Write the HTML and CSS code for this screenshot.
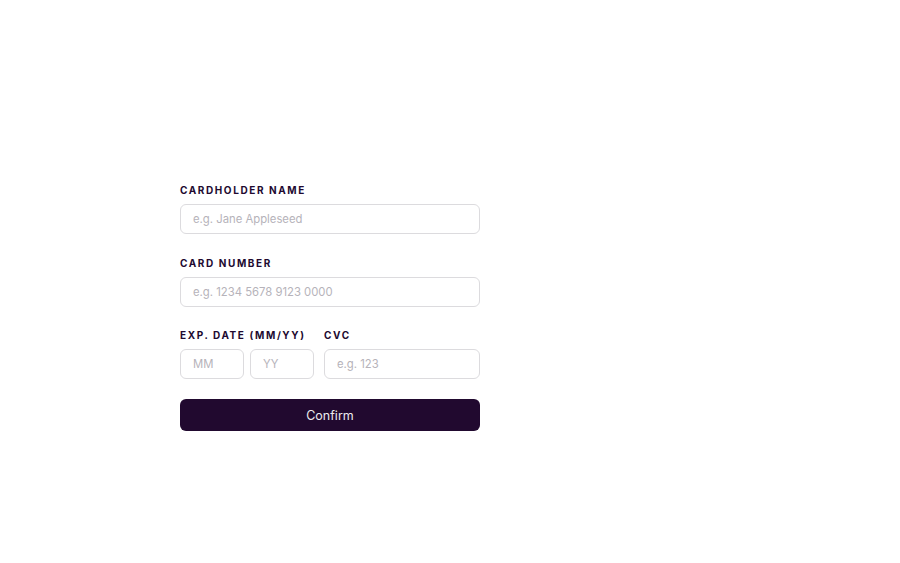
FILE: index.html
```html
<!DOCTYPE html>
<html lang="en">
<head>
<meta charset="utf-8">
<title>Card details</title>
<link rel="stylesheet" href="styles.css">
</head>
<body>
<main class="page">
  <form class="card-form">
    <div class="field">
      <label class="label" for="name">Cardholder Name</label>
      <input class="input" id="name" type="text" placeholder="e.g. Jane Appleseed">
    </div>
    <div class="field">
      <label class="label" for="number">Card Number</label>
      <input class="input" id="number" type="text" placeholder="e.g. 1234 5678 9123 0000">
    </div>
    <div class="row">
      <div class="field date">
        <label class="label" for="mm">Exp. Date (MM/YY)</label>
        <div class="date-inputs">
          <input class="input small" id="mm" type="text" placeholder="MM">
          <input class="input small" id="yy" type="text" placeholder="YY">
        </div>
      </div>
      <div class="field cvc">
        <label class="label" for="cvc">CVC</label>
        <input class="input" id="cvc" type="text" placeholder="e.g. 123">
      </div>
    </div>
    <button class="confirm" type="button">Confirm</button>
  </form>
</main>
</body>
</html>
```

FILE: styles.css
```css
html, body {
  margin: 0;
  padding: 0;
  background: #ffffff;
}
body {
  font-family: Inter, "Liberation Sans", sans-serif;
  color: #21092f;
}
.page {
  padding: 183px 0 0 180px;
}
.card-form {
  width: 300px;
  display: flex;
  flex-direction: column;
}
.field {
  display: flex;
  flex-direction: column;
  margin-bottom: 21.5px;
}
.label {
  font-size: 10px;
  line-height: 14px;
  font-weight: 700;
  letter-spacing: 1.6px;
  text-transform: uppercase;
  color: #21092f;
  margin-bottom: 7px;
  white-space: nowrap;
}
.input {
  box-sizing: border-box;
  height: 30px;
  width: 100%;
  border: 1px solid #dcdbde;
  border-radius: 6px;
  padding: 0 12px;
  font-family: inherit;
  font-size: 11.3px;
  color: #21092f;
  background: #fff;
  outline: none;
}
.input::placeholder {
  color: #b6b3ba;
}
.row {
  display: flex;
  gap: 10px;
}
.date {
  width: 134px;
  margin-bottom: 20px;
}
.date-inputs {
  display: flex;
  gap: 6px;
}
.input.small {
  width: 64px;
}
.cvc {
  flex: 1;
  margin-bottom: 20px;
}
.confirm {
  height: 32px;
  border: none;
  border-radius: 6px;
  background: #21092f;
  color: #ecebee;
  font-family: inherit;
  font-size: 12.5px;
  cursor: pointer;
}
```
